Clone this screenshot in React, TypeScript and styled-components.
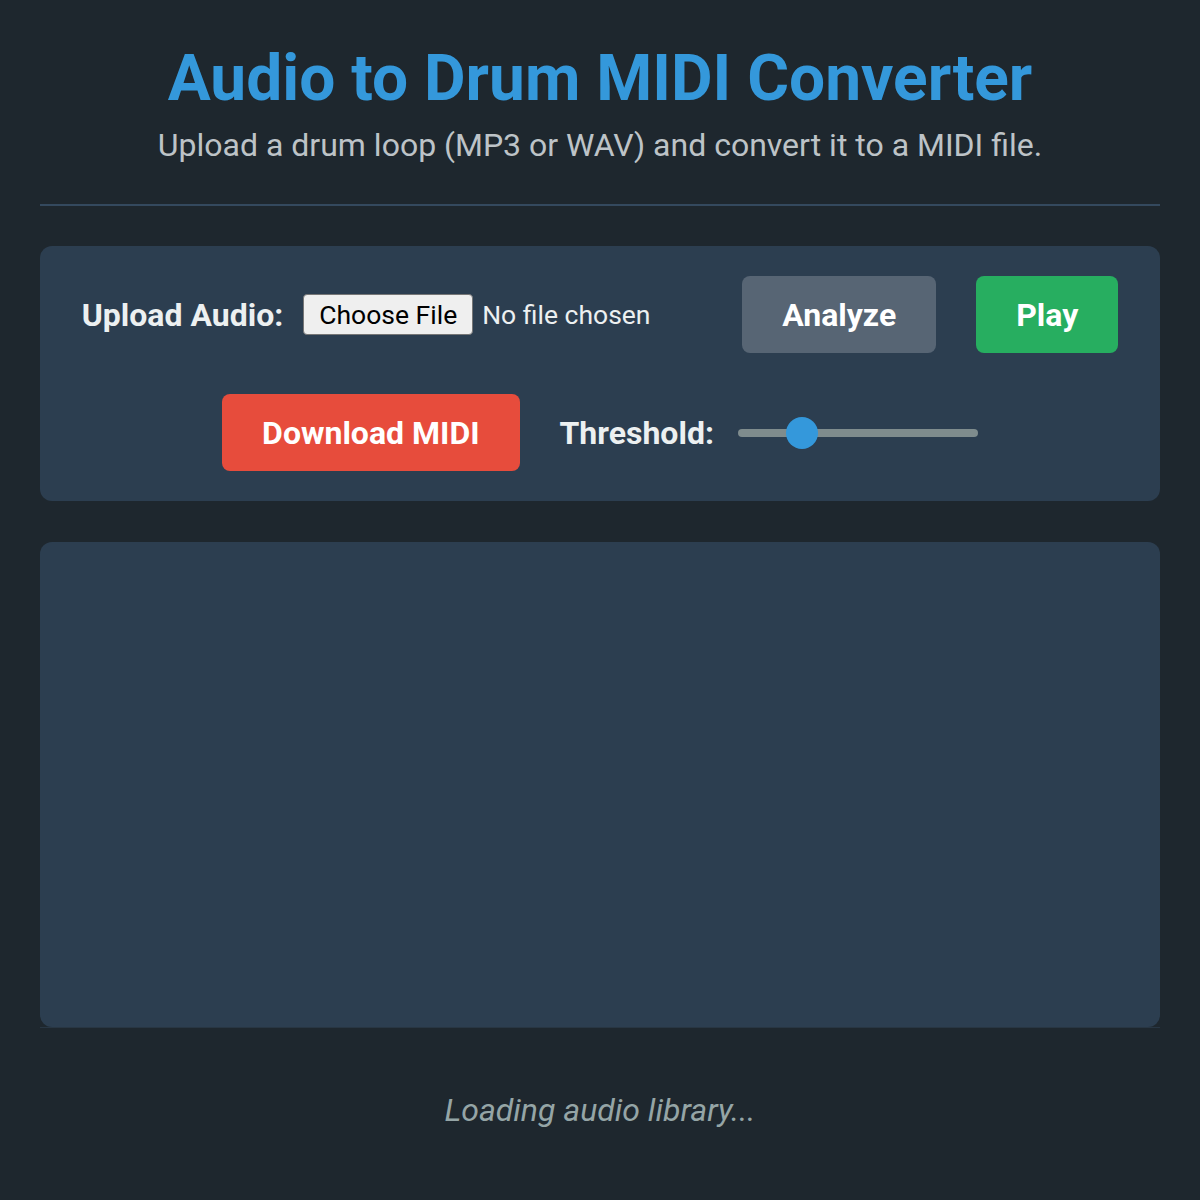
import React from 'react';
import styled, { createGlobalStyle } from 'styled-components';

const GlobalStyle = createGlobalStyle`
  html, body {
    margin: 0;
    padding: 0;
    background: #1e272e;
    font-family: Roboto, "Liberation Sans", sans-serif;
  }
  * {
    box-sizing: border-box;
  }
`;

const Page = styled.div`
  width: 1200px;
  min-height: 1200px;
  padding: 40px 40px 0;
  background: #1e272e;
`;

const Header = styled.header`
  text-align: center;
  padding-bottom: 38px;
  border-bottom: 2px solid #34495e;
`;

const Title = styled.h1`
  margin: 0;
  font-size: 64px;
  line-height: 78px;
  font-weight: 700;
  color: #3498db;
`;

const Subtitle = styled.p`
  margin: 7px 0 0;
  font-size: 32px;
  line-height: 41px;
  color: #bdc3c7;
`;

const Controls = styled.section`
  margin-top: 40px;
  padding: 30px 40px;
  background: #2c3e50;
  border-radius: 12px;
  display: flex;
  flex-direction: column;
  gap: 41px;
`;

const Row = styled.div`
  display: flex;
  justify-content: center;
  align-items: center;
  gap: 40px;
`;

const Group = styled.div`
  display: flex;
  align-items: center;
  gap: 20px;
`;

const Label = styled.label`
  font-size: 32px;
  font-weight: 700;
  color: #ecf0f1;
`;

const FileInput = styled.input`
  width: 399px;
  font-family: Roboto, "Liberation Sans", sans-serif;
  font-size: 26.5px;
  color: #ecf0f1;
  &::file-selector-button {
    height: 41px;
    margin-right: 9px;
    padding: 0 15px;
    border: 1px solid #767676;
    border-radius: 4px;
    background: #efefef;
    color: #000000;
    font-family: Roboto, "Liberation Sans", sans-serif;
    font-size: 26.5px;
  }
`;

const Button = styled.button<{ $bg: string }>`
  height: 77px;
  padding: 0 40px;
  border: none;
  border-radius: 8px;
  background: ${props => props.$bg};
  color: #ffffff;
  font-family: Roboto, "Liberation Sans", sans-serif;
  font-size: 32px;
  font-weight: 700;
  cursor: pointer;
`;

const Slider = styled.input`
  -webkit-appearance: none;
  appearance: none;
  width: 240px;
  height: 8px;
  margin: 0 0 0 4px;
  border-radius: 4px;
  background: #7f8c8d;
  outline: none;
  &::-webkit-slider-thumb {
    -webkit-appearance: none;
    width: 32px;
    height: 32px;
    border-radius: 50%;
    background: #3498db;
    cursor: pointer;
  }
`;

const Visualizer = styled.div`
  margin-top: 41px;
  height: 485px;
  background: #2c3e50;
  border-radius: 12px;
`;

const Rule = styled.div`
  height: 1px;
  background: #283643;
`;

const Status = styled.p`
  margin: 0;
  padding-top: 63px;
  text-align: center;
  font-size: 32px;
  font-style: italic;
  color: #95a5a6;
`;

export default function App() {
  return (
    <Page>
      <GlobalStyle />
      <Header>
        <Title>Audio to Drum MIDI Converter</Title>
        <Subtitle>Upload a drum loop (MP3 or WAV) and convert it to a MIDI file.</Subtitle>
      </Header>
      <Controls>
        <Row>
          <Group>
            <Label htmlFor="audio">Upload Audio:</Label>
            <FileInput id="audio" type="file" accept=".mp3,.wav" />
          </Group>
          <Button $bg="#576574">Analyze</Button>
          <Button $bg="#27ae60">Play</Button>
        </Row>
        <Row>
          <Button $bg="#e74c3c">Download MIDI</Button>
          <Group>
            <Label htmlFor="threshold">Threshold:</Label>
            <Slider id="threshold" type="range" min={0} max={100} defaultValue={23} />
          </Group>
        </Row>
      </Controls>
      <Visualizer />
      <Rule />
      <Status>Loading audio library...</Status>
    </Page>
  );
}
